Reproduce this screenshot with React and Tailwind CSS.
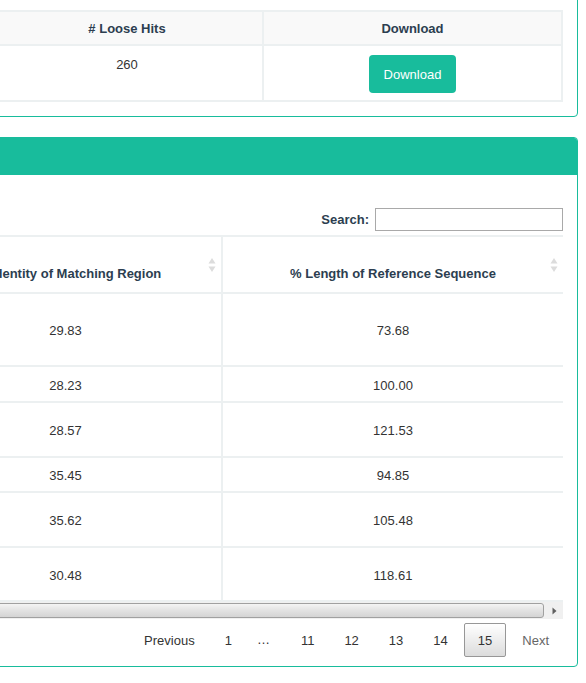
import React from "react";

const rows = [
  { ident: "29.83", len: "73.68", h: "h-[73px]" },
  { ident: "28.23", len: "100.00", h: "h-[36px]" },
  { ident: "28.57", len: "121.53", h: "h-[55px]" },
  { ident: "35.45", len: "94.85", h: "h-[35px]" },
  { ident: "35.62", len: "105.48", h: "h-[55px]" },
  { ident: "30.48", len: "118.61", h: "h-[54px]" },
];

const SortBoth = () => (
  <svg width="8" height="16" viewBox="0 0 8 16" className="absolute right-[5px] top-1/2 -translate-y-1/2">
    <path d="M4 1 L7.5 6.5 L0.5 6.5 Z" fill="#dcdcdc" />
    <path d="M0.5 9.5 L7.5 9.5 L4 15 Z" fill="#dcdcdc" />
  </svg>
);

const pages = ["1", "…", "11", "12", "13", "14", "15"];

export default function App() {
  return (
    <div className="w-[586px] h-[683px] overflow-hidden bg-white font-['Liberation_Sans',Arial,sans-serif] text-[13px] leading-[18.6px] text-[#2c3e50]">
      <div className="ml-[-150px] w-[728px]">
        {/* Summary panel */}
        <div className="mt-[-30px] border border-[#18bc9c] rounded-b-[4px] pl-[15px] pr-[14px] pt-[39px] pb-[14px]">
          <div className="border-2 border-[#ecf0f1]">
            <div className="flex h-[34px] bg-[#f9f9f9] border-b-2 border-[#ecf0f1] font-bold">
              <div className="w-[124px] border-r-2 border-[#ecf0f1] flex items-center justify-center pt-[2px]">Query</div>
              <div className="w-[272px] border-r-2 border-[#ecf0f1] flex items-center justify-center pt-[2px]"># Loose Hits</div>
              <div className="w-[297px] flex items-center justify-center pt-[2px]">Download</div>
            </div>
            <div className="flex h-[54px]">
              <div className="w-[124px] border-r-2 border-[#ecf0f1] pt-[10px] text-center">query</div>
              <div className="w-[272px] border-r-2 border-[#ecf0f1] pt-[10px] text-center text-[#333]">260</div>
              <div className="w-[297px] pt-[9px] flex justify-center">
                <button className="h-[38px] px-[15px] pt-[3px] rounded-[4px] bg-[#18bc9c] text-white text-[13px]">Download</button>
              </div>
            </div>
          </div>
        </div>

        {/* Hits panel */}
        <div className="mt-[20px] border border-[#18bc9c] rounded-[4px] overflow-hidden">
          <div className="h-[37px] bg-[#18bc9c]"></div>
          <div className="pl-[15px] pr-[14px] pt-[33px] pb-[9px]">
            <div className="flex justify-end items-center h-[23px]">
              <label className="font-bold mr-[6px] pt-[2px]">Search:</label>
              <input className="w-[188px] h-[23px] border border-[#a9a9a9] bg-white outline-none" />
            </div>
            <div className="mt-[4px] border-t-2 border-[#ecf0f1]">
              <div className="flex h-[57px] border-b-2 border-[#ecf0f1] font-bold">
                <div className="w-[44px] border-r-2 border-[#ecf0f1]"></div>
                <div className="relative w-[313px] border-r-2 border-[#ecf0f1] flex items-end justify-center pb-[8px] pl-[6px]">
                  <span className="whitespace-nowrap">% Identity of Matching Region</span>
                  <SortBoth />
                </div>
                <div className="relative w-[340px] flex items-end justify-center pb-[8px]">
                  <span className="whitespace-nowrap">% Length of Reference Sequence</span>
                  <SortBoth />
                </div>
              </div>
              {rows.map((r) => (
                <div key={r.ident} className={`flex ${r.h} border-b-2 border-[#ecf0f1] text-[#333]`}>
                  <div className="w-[44px] border-r-2 border-[#ecf0f1]"></div>
                  <div className="w-[313px] border-r-2 border-[#ecf0f1] flex items-center justify-center pt-[4px]">{r.ident}</div>
                  <div className="w-[340px] flex items-center justify-center pt-[4px]">{r.len}</div>
                </div>
              ))}
              {/* horizontal scrollbar */}
              <div className="flex h-[17px] bg-[#f0f0f0]">
                <div className="flex-1 my-[1px] mr-[2px] rounded-r-[3px] border border-[#a0a0a0] bg-gradient-to-b from-[#f4f4f4] via-[#e2e2e2] to-[#d4d4d4]"></div>
                <div className="w-[17px] flex items-center justify-center">
                  <svg width="5" height="8" viewBox="0 0 5 8">
                    <path d="M0.5 0.5 L4.5 4 L0.5 7.5 Z" fill="#606060" />
                  </svg>
                </div>
              </div>
            </div>
            {/* pagination */}
            <div className="mt-[4px] flex justify-end items-center text-[#333]">
              <span className="ml-[2px] pl-[13px] pr-[17px] h-[34px] leading-[34px] border border-transparent rounded-[2px]">Previous</span>
              {pages.map((p) =>
                p === "…" ? (
                  <span key={p} className="px-[15px] h-[34px] leading-[34px]">…</span>
                ) : p === "15" ? (
                  <span key={p} className="ml-[2px] px-[13px] h-[34px] leading-[34px] border border-[#979797] rounded-[2px] bg-gradient-to-b from-white to-[#dcdcdc]">{p}</span>
                ) : p === "1" ? (
                  <span key={p} className="ml-[2px] px-[9px] text-center h-[34px] leading-[34px] border border-transparent rounded-[2px]">{p}</span>
                ) : (
                  <span key={p} className="ml-[2px] px-[13px] text-center h-[34px] leading-[34px] border border-transparent rounded-[2px]">{p}</span>
                )
              )}
              <span className="ml-[2px] px-[13px] h-[34px] leading-[34px] border border-transparent text-[#666]">Next</span>
            </div>
          </div>
        </div>
      </div>
    </div>
  );
}
